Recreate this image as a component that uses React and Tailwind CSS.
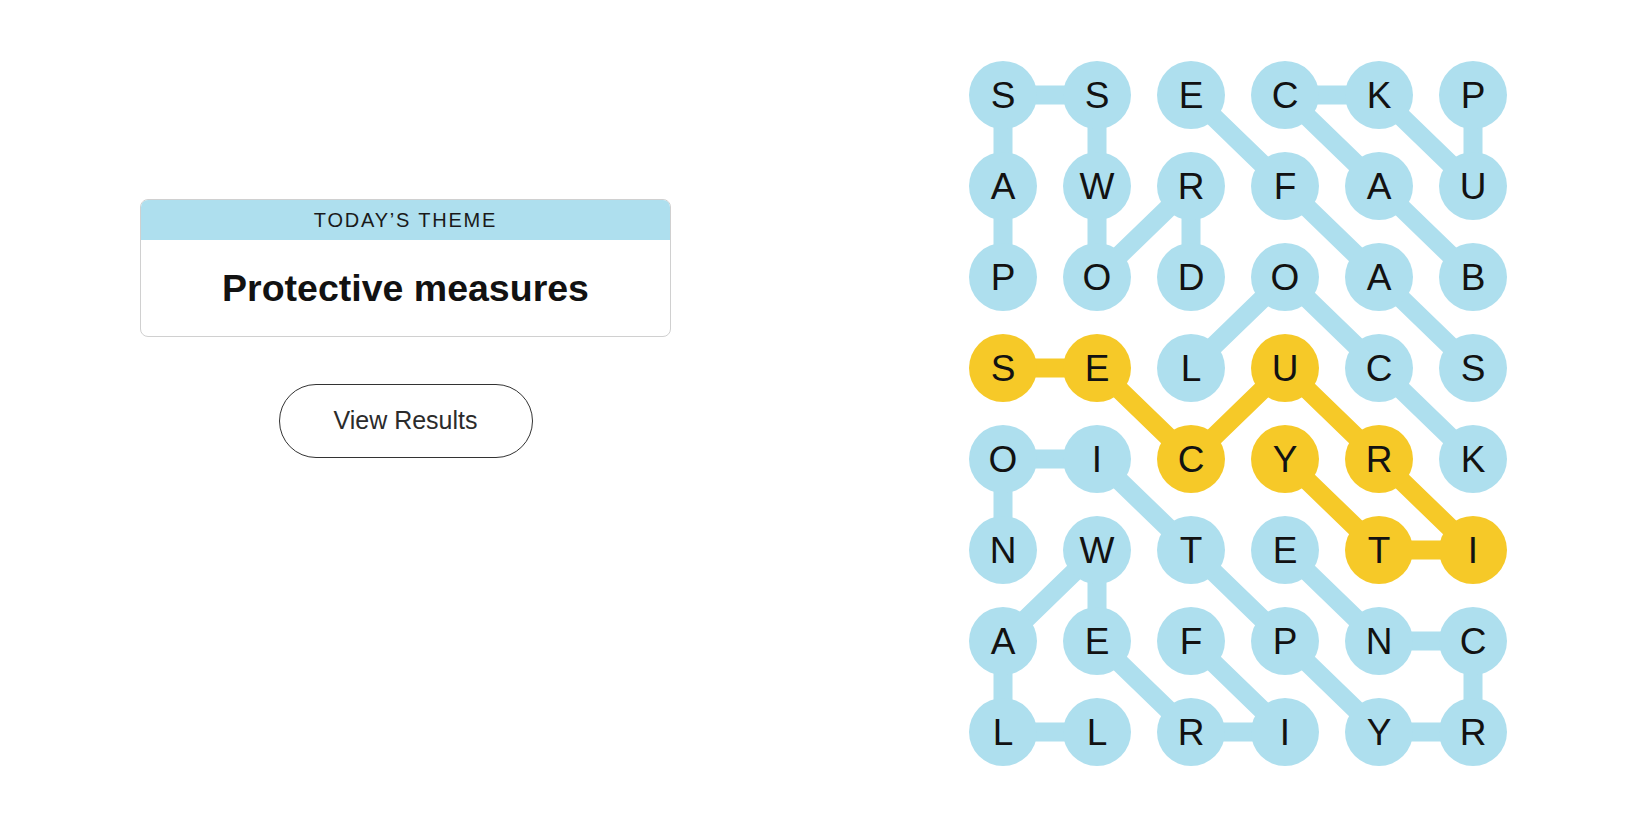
import React from "react";

const BLUE = "#aedfee";
const YELLOW = "#f6c928";

const letters = [
  "SSECKP",
  "AWRFAU",
  "PODOAB",
  "SELUCS",
  "OICYRK",
  "NWTETI",
  "AEFPNC",
  "LLRIYR",
];

// found words as paths of [row, col]
const words = [
  { name: "PASSWORD", spangram: false, path: [[2, 0], [1, 0], [0, 0], [0, 1], [1, 1], [2, 1], [1, 2], [2, 2]] },
  { name: "BACKUP", spangram: false, path: [[2, 5], [1, 4], [0, 3], [0, 4], [1, 5], [0, 5]] },
  { name: "SAFE", spangram: false, path: [[3, 5], [2, 4], [1, 3], [0, 2]] },
  { name: "LOCK", spangram: false, path: [[3, 2], [2, 3], [3, 4], [4, 5]] },
  { name: "ENCRYPTION", spangram: false, path: [[5, 3], [6, 4], [6, 5], [7, 5], [7, 4], [6, 3], [5, 2], [4, 1], [4, 0], [5, 0]] },
  { name: "FIREWALL", spangram: false, path: [[6, 2], [7, 3], [7, 2], [6, 1], [5, 1], [6, 0], [7, 0], [7, 1]] },
  { name: "SECURITY", spangram: true, path: [[3, 0], [3, 1], [4, 2], [3, 3], [4, 4], [5, 5], [5, 4], [4, 3]] },
];

const CELL = 68;
const COL_STEP = 94;
const ROW_STEP = 91;

const spangramCells = new Set(
  words.filter((w) => w.spangram).flatMap((w) => w.path.map(([r, c]) => `${r}-${c}`))
);

const Board = () => {
  const cx = (c) => CELL / 2 + c * COL_STEP;
  const cy = (r) => CELL / 2 + r * ROW_STEP;

  return (
    <div className="relative">
      {/* connectors under the letters */}
      <svg className="absolute inset-0" width="538" height="705" viewBox="0 0 538 705">
        {words.map((w) =>
          w.path.slice(1).map(([r, c], i) => {
            const [pr, pc] = w.path[i];
            return (
              <line
                key={`${w.name}-${i}`}
                x1={cx(pc)}
                y1={cy(pr)}
                x2={cx(c)}
                y2={cy(r)}
                stroke={w.spangram ? YELLOW : BLUE}
                strokeWidth="19"
                strokeLinecap="round"
              />
            );
          })
        )}
      </svg>
      <div className="relative grid grid-cols-[repeat(6,68px)] gap-x-[26px] gap-y-[23px]">
        {letters.map((row, r) =>
          row.split("").map((ch, c) => (
            <div
              key={`${r}-${c}`}
              className={
                spangramCells.has(`${r}-${c}`)
                  ? "w-[68px] h-[68px] rounded-full bg-[#f6c928] flex items-center justify-center text-[37px] leading-none text-[#121212]"
                  : "w-[68px] h-[68px] rounded-full bg-[#aedfee] flex items-center justify-center text-[37px] leading-none text-[#121212]"
              }
            >
              {ch}
            </div>
          ))
        )}
      </div>
    </div>
  );
};

const App = () => {
  return (
    <div className="w-[1650px] h-[825px] bg-white font-['Liberation_Sans',Arial,sans-serif] flex items-start pl-[140px] pt-[61px]">
      <div className="w-[531px] mt-[138px] flex flex-col items-center">
        <div className="w-full border border-[#d0d0d0] rounded-lg overflow-hidden">
          <div className="h-[40px] bg-[#aedfee] flex items-center justify-center text-[20px] tracking-[1.8px] text-[#1a1a1a]">
            TODAY’S THEME
          </div>
          <div className="h-[96px] flex items-center justify-center text-[37.5px] font-bold text-[#121212]">
            Protective measures
          </div>
        </div>
        <button className="mt-[47px] w-[254px] h-[74px] rounded-full border border-[#333333] text-[25px] text-[#2b2b2b] bg-white">
          View Results
        </button>
      </div>
      <div className="ml-[298px]">
        <Board />
      </div>
    </div>
  );
};

export default App;
